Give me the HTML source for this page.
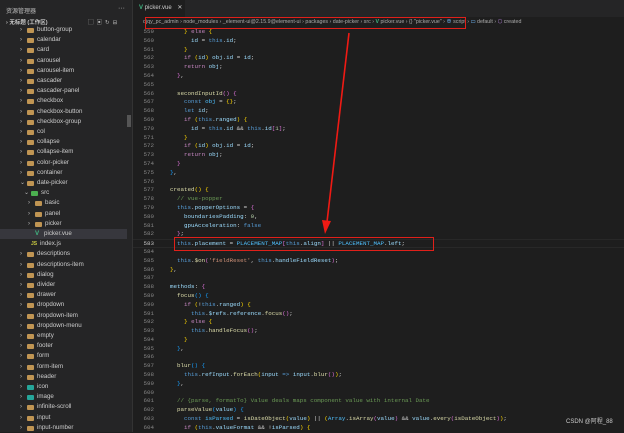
<!DOCTYPE html>
<html><head><meta charset="utf-8"><style>
*{margin:0;padding:0;box-sizing:border-box}
body{width:624px;height:432px;background:#1e1e1e;overflow:hidden;position:relative;font-family:"Liberation Sans","Noto Sans CJK SC",sans-serif;}
#side{position:absolute;left:0;top:0;width:133px;height:432px;background:#252526;border-right:1px solid #333;}
.h1{position:absolute;top:6px;left:6px;font-size:6px;color:#bbb}
.h2{position:absolute;top:18px;left:0;width:133px;height:10px;font-size:5.5px;color:#ccc;font-weight:bold;padding-left:6px;line-height:10px}
.row{position:absolute;left:0;width:127px;height:10.2px;font-size:6.2px;color:#ccc;line-height:10.2px;white-space:nowrap}
.row .ch{position:absolute;color:#bbb;font-size:6px}
.row .fi{position:absolute;top:3px;width:7px;height:5px;background:#c09553;border-radius:1px}
.row .t{position:absolute}
#tabs{position:absolute;left:133px;top:0;width:491px;height:17px;background:#252526}
#tab{position:absolute;left:133px;top:0;width:52px;height:17px;background:#1e1e1e;font-size:6px;color:#ccc;line-height:17px;padding-left:6px}
#bc{position:absolute;left:133px;top:17px;width:491px;height:11px;font-size:5.3px;color:#aaa;line-height:11px;padding-left:10px;white-space:nowrap}
#code{position:absolute;left:133px;top:28px;width:491px;font-family:"Liberation Mono",monospace;font-size:5.85px;}
.l{height:8.8px;line-height:8.8px;white-space:pre;position:relative;color:#d4d4d4}
.n{display:inline-block;width:21px;text-align:right;color:#858585;margin-right:16px}
.k{color:#c586c0}.b{color:#569cd6}.v{color:#9cdcfe}.f{color:#dcdcaa}.s{color:#ce9178}.c{color:#6a9955}.C{color:#4fc1ff}.y{color:#ffd700}.p{color:#da70d6}.q{color:#179fff}.nm{color:#b5cea8}
</style></head><body>
<div id="side">
<div class="h1">资源管理器</div><div style="position:absolute;top:5px;left:118px;color:#bbb;font-size:7px">···</div>
<div class="h2">› 无标题 (工作区)<span style="position:absolute;left:88px;color:#bbb;font-weight:normal;letter-spacing:3px">▢▣↻⊟</span></div>
<div style="position:absolute;left:127px;top:115px;width:4px;height:12px;background:#555"></div>
<div id="rows"></div>
</div>
<div id="tabs"></div>
<div id="tab"><span style="color:#41b883;font-weight:bold">V</span> picker.vue <span style="margin-left:4px">✕</span></div>
<div id="bc">qjqy_pc_admin › node_modules › _element-ui@2.15.9@element-ui › packages › date-picker › src › <span style="color:#41b883;font-weight:bold">V</span> picker.vue › {} "picker.vue" › <span style="color:#75beff">⊕</span> script › <span style="color:#75beff">▭</span> default › <span style="color:#b180d7">⬡</span> created</div>
<div id="code"></div>
<div style="position:absolute;left:145px;top:17px;width:321px;height:12px;border:1.3px solid #e0201a"></div>
<div style="position:absolute;left:174px;top:237px;width:260px;height:14px;border:1.3px solid #e0201a"></div>
<svg style="position:absolute;left:0;top:0" width="624" height="432"><line x1="349" y1="33" x2="327" y2="222" stroke="#f01a14" stroke-width="1.6"/><polygon points="322,220 331,221 325,234" fill="#f01a14"/></svg>
<div style="position:absolute;left:566px;top:416px;font-size:6px;color:#ccc">CSDN @阿程_88</div>
<script>
var rows=[[1,'button-group'],[1,'calendar'],[1,'card'],[1,'carousel'],[1,'carousel-item'],[1,'cascader'],[1,'cascader-panel'],[1,'checkbox'],[1,'checkbox-button'],[1,'checkbox-group'],[1,'col'],[1,'collapse'],[1,'collapse-item'],[1,'color-picker'],[1,'container'],[1,'date-picker','o'],[2,'src','g'],[3,'basic'],[3,'panel'],[3,'picker'],[3,'picker.vue','v'],[2,'index.js','j'],[1,'descriptions'],[1,'descriptions-item'],[1,'dialog'],[1,'divider'],[1,'drawer'],[1,'dropdown'],[1,'dropdown-item'],[1,'dropdown-menu'],[1,'empty'],[1,'footer'],[1,'form'],[1,'form-item'],[1,'header'],[1,'icon','t'],[1,'image','t'],[1,'infinite-scroll'],[1,'input'],[1,'input-number']];
var h='';rows.forEach(function(r,i){var top=25+i*10.2,x=20+(r[0]-1)*4;var bg=r[2]=='v'?'background:#37373d;':'';h+='<div class="row" style="top:'+top+'px;'+bg+'">';
if(r[2]=='v'){h+='<span class="t" style="left:'+(x+7)+'px;color:#41b883;font-weight:bold">V</span><span class="t" style="left:'+(x+16)+'px">'+r[1]+'</span>';}
else if(r[2]=='j'){h+='<span class="t" style="left:'+(x+7)+'px;color:#cbcb41;font-size:5px;font-weight:bold">JS</span><span class="t" style="left:'+(x+16)+'px">'+r[1]+'</span>';}
else{h+='<span class="ch" style="left:'+x+'px">'+(r[2]=='o'||r[2]=='g'?'⌄':'›')+'</span><span class="fi" style="left:'+(x+7)+'px;'+(r[2]=='g'?'background:#4caf50':r[2]=='t'?'background:#26a69a':'')+'"></span><span class="t" style="left:'+(x+17)+'px">'+r[1]+'</span>';}
h+='</div>';});document.getElementById('rows').innerHTML=h;
var L=[
'    <span class="y">}</span> <span class="k">else</span> <span class="y">{</span>',
'      <span class="v">id</span> = <span class="b">this</span>.<span class="v">id</span>;',
'    <span class="y">}</span>',
'    <span class="k">if</span> <span class="y">(</span><span class="v">id</span><span class="y">)</span> <span class="v">obj</span>.<span class="v">id</span> = <span class="v">id</span>;',
'    <span class="k">return</span> <span class="v">obj</span>;',
'  <span class="p">}</span>,',
'',
'  <span class="f">secondInputId</span><span class="p">()</span> <span class="p">{</span>',
'    <span class="b">const</span> <span class="C">obj</span> = <span class="y">{}</span>;',
'    <span class="b">let</span> <span class="v">id</span>;',
'    <span class="k">if</span> <span class="y">(</span><span class="b">this</span>.<span class="v">ranged</span><span class="y">)</span> <span class="y">{</span>',
'      <span class="v">id</span> = <span class="b">this</span>.<span class="v">id</span> &amp;&amp; <span class="b">this</span>.<span class="v">id</span><span class="p">[</span><span class="nm">1</span><span class="p">]</span>;',
'    <span class="y">}</span>',
'    <span class="k">if</span> <span class="y">(</span><span class="v">id</span><span class="y">)</span> <span class="v">obj</span>.<span class="v">id</span> = <span class="v">id</span>;',
'    <span class="k">return</span> <span class="v">obj</span>;',
'  <span class="p">}</span>',
'<span class="q">}</span>,',
'',
'<span class="f">created</span><span class="y">()</span> <span class="y">{</span>',
'  <span class="c">// vue-popper</span>',
'  <span class="b">this</span>.<span class="v">popperOptions</span> = <span class="p">{</span>',
'    <span class="v">boundariesPadding</span>: <span class="nm">0</span>,',
'    <span class="v">gpuAcceleration</span>: <span class="b">false</span>',
'  <span class="p">}</span>;',
'  <span class="b">this</span>.<span class="v">placement</span> = <span class="C">PLACEMENT_MAP</span><span class="p">[</span><span class="b">this</span>.<span class="v">align</span><span class="p">]</span> || <span class="C">PLACEMENT_MAP</span>.<span class="v">left</span>;',
'',
'  <span class="b">this</span>.<span class="f">$on</span><span class="p">(</span><span class="s">\'fieldReset\'</span>, <span class="b">this</span>.<span class="v">handleFieldReset</span><span class="p">)</span>;',
'<span class="y">}</span>,',
'',
'<span class="v">methods</span>: <span class="p">{</span>',
'  <span class="f">focus</span><span class="q">()</span> <span class="q">{</span>',
'    <span class="k">if</span> <span class="y">(</span>!<span class="b">this</span>.<span class="v">ranged</span><span class="y">)</span> <span class="y">{</span>',
'      <span class="b">this</span>.<span class="v">$refs</span>.<span class="v">reference</span>.<span class="f">focus</span><span class="p">()</span>;',
'    <span class="y">}</span> <span class="k">else</span> <span class="y">{</span>',
'      <span class="b">this</span>.<span class="f">handleFocus</span><span class="p">()</span>;',
'    <span class="y">}</span>',
'  <span class="q">}</span>,',
'',
'  <span class="f">blur</span><span class="q">()</span> <span class="q">{</span>',
'    <span class="b">this</span>.<span class="v">refInput</span>.<span class="f">forEach</span><span class="y">(</span><span class="v">input</span> <span class="b">=&gt;</span> <span class="v">input</span>.<span class="f">blur</span><span class="p">()</span><span class="y">)</span>;',
'  <span class="q">}</span>,',
'',
'  <span class="c">// {parse, formatTo} Value deals maps component value with internal Date</span>',
'  <span class="f">parseValue</span><span class="q">(</span><span class="v">value</span><span class="q">)</span> <span class="q">{</span>',
'    <span class="b">const</span> <span class="C">isParsed</span> = <span class="f">isDateObject</span><span class="y">(</span><span class="v">value</span><span class="y">)</span> || <span class="y">(</span><span class="C">Array</span>.<span class="f">isArray</span><span class="p">(</span><span class="v">value</span><span class="p">)</span> &amp;&amp; <span class="v">value</span>.<span class="f">every</span><span class="p">(</span><span class="f">isDateObject</span><span class="p">)</span><span class="y">)</span>;',
'    <span class="k">if</span> <span class="y">(</span><span class="b">this</span>.<span class="v">valueFormat</span> &amp;&amp; !<span class="v">isParsed</span><span class="y">)</span> <span class="y">{</span>'];
var c='';L.forEach(function(s,i){var n=559+i;var hl=n==583?'border-top:1px solid #282828;border-bottom:1px solid #282828;':'';c+='<div class="l" style="'+hl+'"><span class="n" style="'+(n==583?'color:#c6c6c6':'')+'">'+n+'</span>'+s+'</div>';});
document.getElementById('code').innerHTML=c;
</script>
</body></html>
